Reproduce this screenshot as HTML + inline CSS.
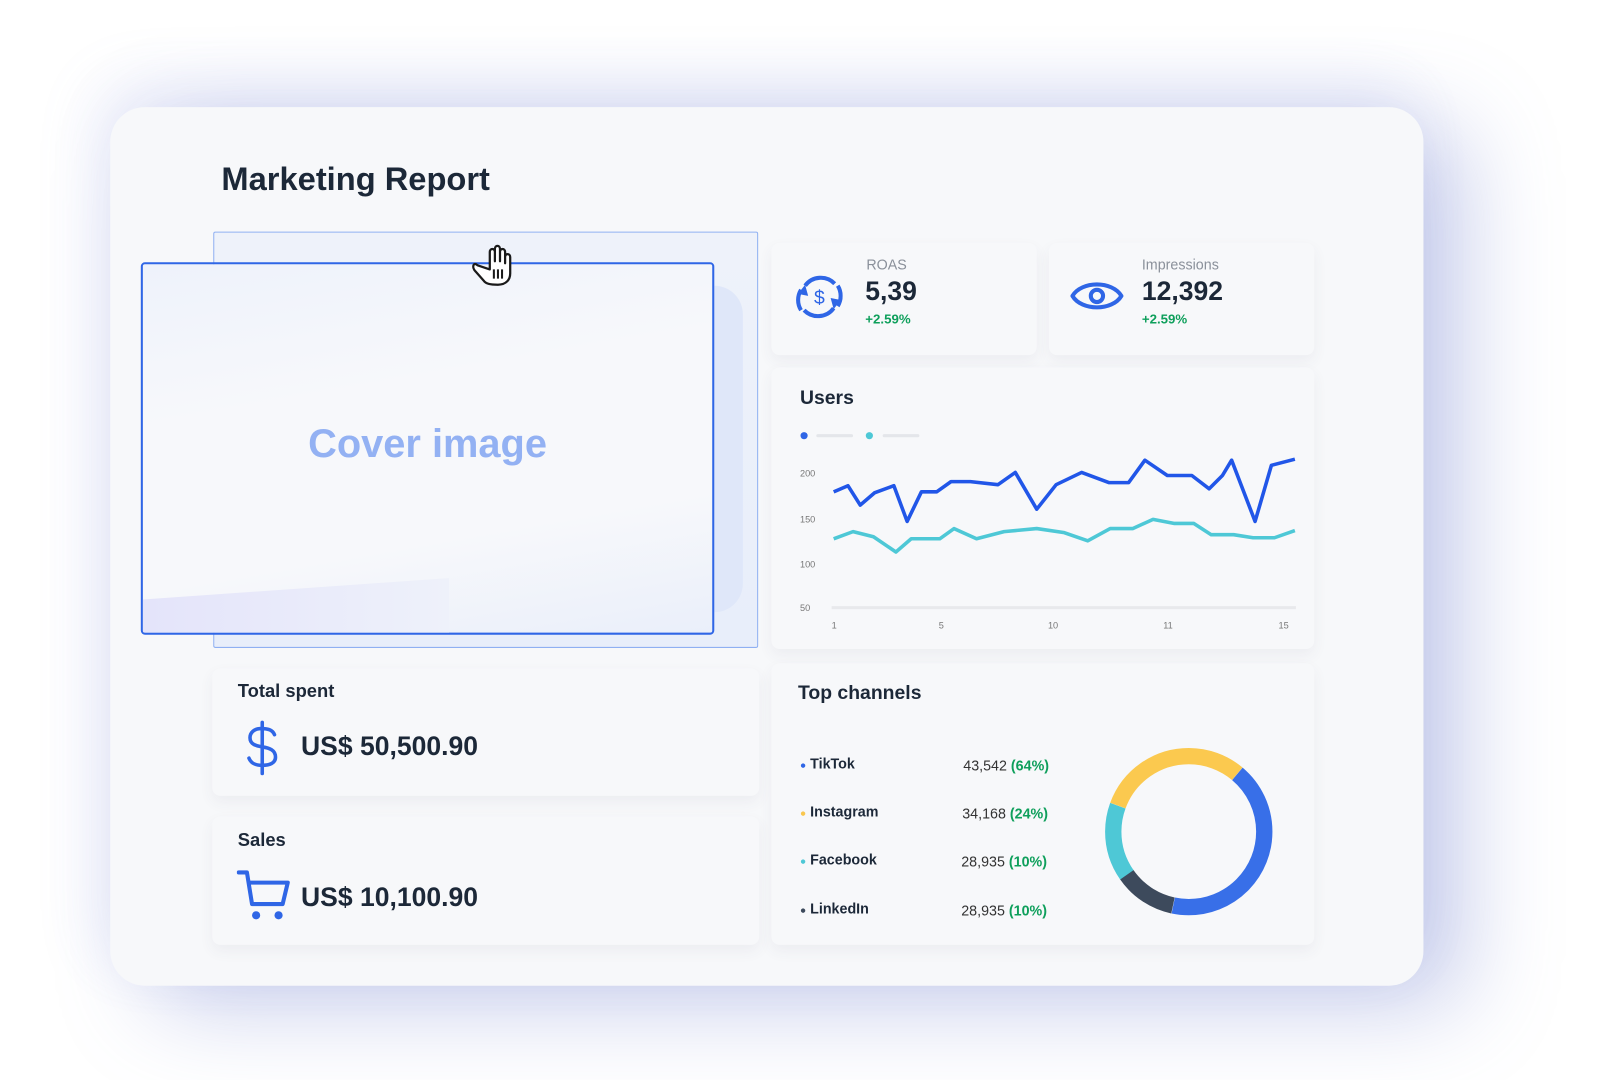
<!DOCTYPE html>
<html><head><meta charset="utf-8">
<style>
*{margin:0;padding:0;box-sizing:border-box}
body{width:1600px;height:1058px;background:#fff;font-family:"Liberation Sans",Arial,sans-serif;position:relative;overflow:hidden;color:#1c2838}
#wrap{position:absolute;left:0;top:0;width:1600px;height:1058px;transform:scale(1.0204);transform-origin:0 0}
.abs{position:absolute}
.main{left:108px;top:105px;width:1287px;height:861px;background:#f7f8fa;border-radius:34px;box-shadow:40px 20px 90px rgba(110,125,205,.38),-10px -20px 60px rgba(140,150,220,.18)}
.card{position:absolute;background:#f7f8fa;border-radius:8px;box-shadow:0 6px 14px rgba(60,70,110,.06)}
.lbl{font-size:14px;color:#8a909a}
.big{font-size:26px;font-weight:bold;color:#1c2838}
.grn{color:#0e9f5b;font-size:13px;font-weight:bold}
.h{font-size:19px;font-weight:bold;color:#1c2838}
</style></head><body><div id="wrap">
<div class="abs main"></div>
<div class="abs" style="left:217px;top:157px;font-size:32px;font-weight:bold;color:#1c2838">Marketing Report</div>

<div class="abs" style="left:209px;top:227px;width:534px;height:408px;border:1.5px solid #8fb0f2;background:linear-gradient(180deg,#eef2fa,#e8eefa);border-radius:2px"></div>
<div class="abs" style="left:700px;top:280px;width:28px;height:320px;background:#dfe7f9;border-radius:0 30px 30px 0"></div>
<div class="abs" style="left:138px;top:257px;width:562px;height:365px;border:2px solid #2f66e6;border-radius:4px;background:linear-gradient(170deg,#eef2fb 0%,#f7f8fb 35%,#f7f8fb 70%,#eaeffa 100%);overflow:hidden">
 <div class="abs" style="left:0;top:318px;width:300px;height:60px;background:linear-gradient(90deg,#e4e4fa,#eef1fa);transform:skewY(-4deg)"></div>
 <div style="position:absolute;left:0;right:0;top:155px;text-align:center;font-size:39px;font-weight:bold;color:#93b1f3">Cover image</div>
</div>
<svg class="abs" style="left:460px;top:238px" width="46" height="44" viewBox="0 0 46 44">
<path d="M8 22 C4 18 2 24 6 28 L14 37 C16 40 20 41 28 41 C36 41 40 36 40 30 L40 14 C40 10 35 10 35 14 L35 20 L35 9 C35 5 30 5 30 9 L30 18 L30 6 C30 2 25 2 25 6 L25 18 L25 9 C25 5 20 5 20 9 L20 26 Z" fill="#fff" stroke="#1a1a1a" stroke-width="2.2" stroke-linejoin="round"/>
<path d="M24 26v9M28 26v9M32 26v9" stroke="#1a1a1a" stroke-width="2"/>
</svg>

<div class="card" style="left:756px;top:238px;width:260px;height:110px"></div>
<svg class="abs" style="left:780px;top:268px" width="46" height="46" viewBox="0 0 46 46">
<path d="M9 12 A19 19 0 0 1 38 10" fill="none" stroke="#2f66e6" stroke-width="4"/>
<path d="M37 34 A19 19 0 0 1 8 36" fill="none" stroke="#2f66e6" stroke-width="4"/>
<path d="M5 36 A19 19 0 0 1 5 16" fill="none" stroke="#2f66e6" stroke-width="4"/>
<path d="M41 12 A19 19 0 0 1 41 32" fill="none" stroke="#2f66e6" stroke-width="4"/>
<path d="M2 20 L9 11 L12 22Z M44 26 L37 35 L34 24Z" fill="#2f66e6"/>
<text x="23" y="30" text-anchor="middle" font-size="19" fill="#2f66e6" font-family="Liberation Sans">$</text>
</svg>
<div class="abs lbl" style="left:849px;top:251px">ROAS</div>
<div class="abs big" style="left:848px;top:270px">5,39</div>
<div class="abs grn" style="left:848px;top:305px">+2.59%</div>

<div class="card" style="left:1028px;top:238px;width:260px;height:110px"></div>
<svg class="abs" style="left:1048px;top:270px" width="54" height="40" viewBox="0 0 54 40">
<path d="M3 20 C12 5 42 5 51 20 C42 35 12 35 3 20Z" fill="none" stroke="#2f66e6" stroke-width="4" stroke-linejoin="round"/>
<circle cx="27" cy="20" r="6" fill="none" stroke="#2f66e6" stroke-width="4"/>
</svg>
<div class="abs lbl" style="left:1119px;top:251px">Impressions</div>
<div class="abs big" style="left:1119px;top:270px">12,392</div>
<div class="abs grn" style="left:1119px;top:305px">+2.59%</div>

<div class="card" style="left:756px;top:360px;width:532px;height:276px"></div>
<div class="abs h" style="left:784px;top:380px">Users</div>
<svg class="abs" style="left:756px;top:360px" width="532" height="276" viewBox="756 360 532 276">
<circle cx="788" cy="427" r="3.5" fill="#2f66e6"/><rect x="800" y="425.5" width="36" height="3" rx="1.5" fill="#e4e6ea"/>
<circle cx="852" cy="427" r="3.5" fill="#4ec8d6"/><rect x="865" y="425.5" width="36" height="3" rx="1.5" fill="#e4e6ea"/>
<rect x="815" y="594" width="455" height="3" fill="#e8e9ec"/>
<polyline fill="none" stroke="#2156e8" stroke-width="3.5" stroke-linejoin="round" points="817,482 831,476 843,495 857,483 876,476 889,511 903,482 918,482 932,472 951,472 978,475 995,463 1016,499 1035,475 1060,463 1087,473 1106,473 1122,451 1144,466 1168,466 1185,479 1198,466 1207,451 1230,511 1246,456 1269,450"/>
<polyline fill="none" stroke="#4ec8d6" stroke-width="3.5" stroke-linejoin="round" points="817,528 836,521 856,526 878,541 893,528 921,528 935,518 957,528 984,521 1016,518 1043,522 1066,530 1088,518 1110,518 1130,509 1151,513 1170,513 1187,524 1209,524 1228,527 1249,527 1269,520"/>
<g font-family="Liberation Sans" font-size="9" fill="#777">
<text x="784" y="467">200</text><text x="784" y="512">150</text><text x="784" y="556">100</text><text x="784" y="599">50</text>
<text x="815" y="616">1</text><text x="920" y="616">5</text><text x="1027" y="616">10</text><text x="1140" y="616">11</text><text x="1253" y="616">15</text>
</g>
</svg>

<div class="card" style="left:208px;top:655px;width:536px;height:125px"></div>
<div class="abs" style="left:233px;top:667px;font-size:18px;font-weight:bold">Total spent</div>
<svg class="abs" style="left:240px;top:706px" width="36" height="54" viewBox="0 0 36 54">
<path d="M17 2v50" stroke="#2f66e6" stroke-width="3.5" stroke-linecap="round"/>
<path d="M29 14 C27 9 22 8 16 8 C9 8 5 12 5 17 C5 24 12 25 17 26 C24 27 30 29 30 36 C30 42 24 44 17 44 C10 44 6 42 4 37" fill="none" stroke="#2f66e6" stroke-width="3.5" stroke-linecap="round"/>
</svg>
<div class="abs" style="left:295px;top:716px;font-size:26px;font-weight:bold;color:#1c2838">US$ 50,500.90</div>

<div class="card" style="left:208px;top:800px;width:536px;height:126px"></div>
<div class="abs" style="left:233px;top:813px;font-size:18px;font-weight:bold">Sales</div>
<svg class="abs" style="left:232px;top:851px" width="54" height="52" viewBox="0 0 54 52">
<path d="M2 4 H10 L15 35 H45 L50 14 H12" fill="none" stroke="#2f66e6" stroke-width="4" stroke-linejoin="round" stroke-linecap="round"/>
<circle cx="19" cy="46" r="4" fill="#2f66e6"/><circle cx="41" cy="46" r="4" fill="#2f66e6"/>
</svg>
<div class="abs" style="left:295px;top:864px;font-size:26px;font-weight:bold;color:#1c2838">US$ 10,100.90</div>

<div class="card" style="left:756px;top:650px;width:532px;height:276px"></div>
<div class="abs h" style="left:782px;top:669px">Top channels</div>
<div class="abs" style="left:784px;top:738px;font-size:14px;font-weight:bold;line-height:20px">
<div style="position:absolute;top:0;white-space:nowrap"><span style="color:#2f66e6;font-size:10px">●</span>&nbsp;TikTok</div>
<div style="position:absolute;top:47px;white-space:nowrap"><span style="color:#f9c74f;font-size:10px">●</span>&nbsp;Instagram</div>
<div style="position:absolute;top:94px;white-space:nowrap"><span style="color:#4ec8d6;font-size:10px">●</span>&nbsp;Facebook</div>
<div style="position:absolute;top:142px;white-space:nowrap"><span style="color:#3d4a5c;font-size:10px">●</span>&nbsp;LinkedIn</div>
</div>
<div class="abs" style="left:942px;top:740px;font-size:14px;color:#333;line-height:20px;white-space:nowrap">
<div style="position:absolute;left:2px;top:0">43,542 <b style="color:#0e9f5b">(64%)</b></div>
<div style="position:absolute;left:1px;top:47px">34,168 <b style="color:#0e9f5b">(24%)</b></div>
<div style="position:absolute;left:0;top:94px">28,935 <b style="color:#0e9f5b">(10%)</b></div>
<div style="position:absolute;left:0;top:142px">28,935 <b style="color:#0e9f5b">(10%)</b></div>
</div>
<svg class="abs" style="left:1075px;top:725px" width="180" height="180" viewBox="0 0 180 180">
<g transform="rotate(-90 90 90)" fill="none" stroke-width="16">
<circle cx="90" cy="90" r="74" stroke="#386fe8" stroke-dasharray="196 269" stroke-dashoffset="-51.7"/>
<circle cx="90" cy="90" r="74" stroke="#3d4a5c" stroke-dasharray="56 409" stroke-dashoffset="-248"/>
<circle cx="90" cy="90" r="74" stroke="#4ec8d6" stroke-dasharray="71 394" stroke-dashoffset="-303.5"/>
<circle cx="90" cy="90" r="74" stroke="#fbc94f" stroke-dasharray="142 323" stroke-dashoffset="-374.6"/>
</g>
</svg>
</div></body></html>
